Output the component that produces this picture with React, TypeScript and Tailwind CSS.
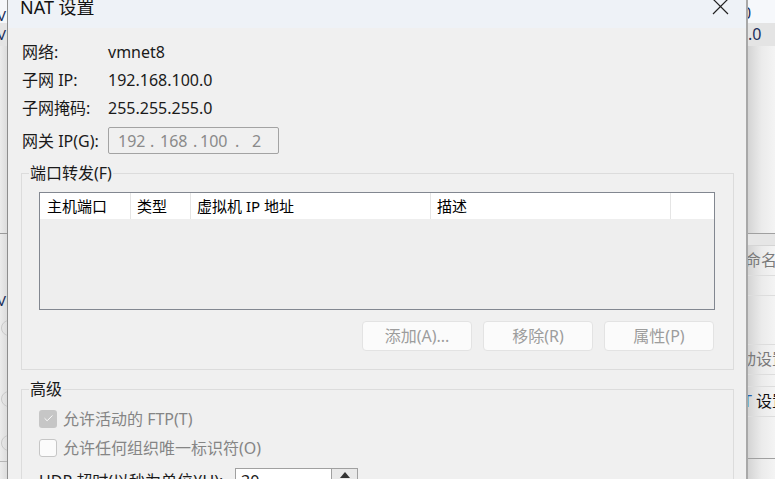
import { Check } from 'lucide-react';

function LeftStrip() {
  return (
    <div className="flex w-[7px] shrink-0 flex-col overflow-hidden bg-gradient-to-r from-[#ececec] to-[#dcdcdc] text-[15px] text-[#1b2f5c]">
      <div className="h-[23px] shrink-0 whitespace-nowrap bg-[#f5f7fa] leading-[30px] -ml-[3px]">VM</div>
      <div className="h-[23px] shrink-0 whitespace-nowrap bg-[#e4e4e4] leading-[23px] -ml-[3px]">VM</div>
      <div className="h-[187px] shrink-0" />
      <div className="h-[57px] shrink-0 border-t border-[#9a9a9a]" />
      <div className="h-[24px] shrink-0 whitespace-nowrap leading-[20px] -ml-[3px]">VM</div>
      <div className="ml-[1px] mt-[6px] h-[16px] w-[16px] shrink-0 rounded-full border border-[#c9c9c9]" />
      <div className="ml-[1px] mt-[55px] h-[16px] w-[16px] shrink-0 rounded-full border border-[#c9c9c9]" />
      <div className="ml-[1px] mt-[28px] h-[16px] w-[16px] shrink-0 rounded-full border border-[#c9c9c9]" />
      <div className="mt-[10px] shrink-0 border-t border-[#b5b5b5]" />
    </div>
  );
}

function RightStrip() {
  return (
    <div className="flex min-w-0 flex-1 flex-col overflow-hidden bg-gradient-to-r from-[#d4d4d4] via-[#ebebeb] to-[#f4f4f4] text-[16px]">
      <div className="h-[23px] shrink-0 whitespace-nowrap bg-[#f6f8fb] leading-[26px] text-[#1b2f5c] -ml-[6px]">0</div>
      <div className="h-[23px] shrink-0 whitespace-nowrap bg-[#e4e4e4] leading-[23px] text-[#1b2f5c]">.0</div>
      <div className="h-[187px] shrink-0" />
      <div className="h-[12px] shrink-0 border-t border-[#a0a0a0] bg-[#e6e6e6]" />
      <div className="h-[30px] shrink-0 whitespace-nowrap border-t border-[#d5d5d5] leading-[29px] text-[#7a7a7a] -ml-[3px]">命名</div>
      <div className="h-[20px] shrink-0 border-t border-[#dddddd]" />
      <div className="h-[49px] shrink-0 border-t border-[#dddddd]" />
      <div className="h-[30px] shrink-0 whitespace-nowrap border-t border-[#dddddd] leading-[29px] text-[#7a7a7a] -ml-[8px]">动设置</div>
      <div className="h-[12px] shrink-0 border-t border-[#dddddd]" />
      <div className="h-[30px] shrink-0 whitespace-nowrap border-t border-[#dddddd] leading-[29px] text-[#111] -ml-[5px]">
        <span className="text-[#2563b0]">T</span> 设置
      </div>
      <div className="h-[42px] shrink-0 border-t border-[#dddddd]" />
      <div className="h-[20px] shrink-0 border-t border-[#a0a0a0]" />
    </div>
  );
}

function InfoRow({ label, value }: { label: string; value: string }) {
  return (
    <div className="ml-[14px] flex h-[28px] items-center">
      <span className="w-[86px]">{label}</span>
      <span>{value}</span>
    </div>
  );
}

function Dialog() {
  const buttons = ['添加(A)...', '移除(R)', '属性(P)'];

  return (
    <div className="relative z-10 flex w-[741px] shrink-0 flex-col border-l border-r-2 border-l-[#8e8e8e] border-r-[#a8a8a8] bg-[#f0f0f0]">
      {/* title bar */}
      <div className="flex h-[28px] shrink-0 items-start bg-[#eef2f7]">
        <span className="ml-[12px] mt-[-2px] text-[18px] leading-[19px] text-[#111]">NAT 设置</span>
        <svg className="ml-auto mr-[17px] mt-[-2px]" width="17" height="17" viewBox="0 0 17 17">
          <path d="M1 1L16 16M16 1L1 16" stroke="#222" strokeWidth="1.2" fill="none" />
        </svg>
      </div>

      <div className="flex flex-col pt-[10px]">
        <InfoRow label="网络:" value="vmnet8" />
        <InfoRow label="子网 IP:" value="192.168.100.0" />
        <InfoRow label="子网掩码:" value="255.255.255.0" />

        <div className="ml-[14px] mt-[5px] flex h-[27px] items-center">
          <span className="w-[86px]">网关 IP(G):</span>
          <div className="flex h-[27px] w-[171px] items-center rounded-[2px] border border-[#a3a3a3] pl-[9px] text-[#8a8a8a]">
            <span className="w-[32px]">192</span>
            <span className="w-[10px]">.</span>
            <span className="w-[33px]">168</span>
            <span className="w-[7px]">.</span>
            <span className="w-[35px]">100</span>
            <span className="w-[17px]">.</span>
            <span>2</span>
          </div>
        </div>

        {/* port forwarding */}
        <fieldset className="ml-[13px] mt-[9px] w-[713px] border border-[#dcdcdc]">
          <legend className="ml-[7px] px-[1px] leading-[20px]">端口转发(F)</legend>
          <div className="ml-[17px] mr-[18px] mt-[9px] h-[118px] border border-[#828790] bg-[#eeeeee] text-[15px]">
            <div className="flex h-[26px] bg-white leading-[26px] text-black">
              <div className="w-[91px] border-r border-[#e5e5e5] pl-[7px]">主机端口</div>
              <div className="w-[60px] border-r border-[#e5e5e5] pl-[6px]">类型</div>
              <div className="w-[240px] border-r border-[#e5e5e5] pl-[6px]">虚拟机 IP 地址</div>
              <div className="w-[240px] border-r border-[#e5e5e5] pl-[6px]">描述</div>
              <div className="flex-1" />
            </div>
          </div>
          <div className="mb-[18px] mr-[19px] mt-[11px] flex justify-end gap-[11px]">
            {buttons.map((b) => (
              <button
                key={b}
                className="h-[30px] w-[110px] rounded-[4px] border border-[#e3e3e3] bg-[#fbfbfb] text-[#9d9d9d]"
              >
                {b}
              </button>
            ))}
          </div>
        </fieldset>

        {/* advanced */}
        <fieldset className="ml-[13px] mt-[9px] w-[713px] border border-[#dcdcdc] pb-[10px]">
          <legend className="ml-[7px] px-[1px] leading-[20px]">高级</legend>
          <div className="ml-[17px] mt-[5px] flex h-[29px] items-center gap-[6px] text-[#858585]">
            <span className="flex h-[18px] w-[18px] items-center justify-center rounded-[3px] bg-[#c6c6c6]">
              <Check size={11} color="#ffffff" strokeWidth={2} />
            </span>
            允许活动的 FTP(T)
          </div>
          <div className="ml-[17px] flex h-[29px] items-center gap-[6px] text-[#858585]">
            <span className="h-[18px] w-[18px] rounded-[3px] border border-[#c6c6c6] bg-[#fbfbfb]" />
            允许任何组织唯一标识符(O)
          </div>
          <div className="ml-[17px] mt-[6px] flex items-center">
            <span className="w-[196px]">UDP 超时(以秒为单位)(U):</span>
            <div className="flex h-[26px] w-[123px] border border-[#a0a0a0] bg-white">
              <span className="flex-1 pl-[5px] leading-[24px]">30</span>
              <div className="flex w-[26px] flex-col border-l border-[#a0a0a0]">
                <div className="flex h-[12px] items-center justify-center border-b border-[#a0a0a0] bg-[#e9e9e9]">
                  <svg width="10" height="6" viewBox="0 0 10 6">
                    <path d="M0 6L5 0L10 6Z" fill="#333" />
                  </svg>
                </div>
                <div className="flex-1 bg-[#e9e9e9]" />
              </div>
            </div>
          </div>
        </fieldset>
      </div>
    </div>
  );
}

export default function App() {
  return (
    <div className="flex h-[479px] w-[775px] overflow-hidden bg-[#f0f0f0] font-['Noto_Sans','Noto_Sans_CJK_SC',sans-serif] text-[16px] text-[#1a1a1a]">
      <LeftStrip />
      <Dialog />
      <RightStrip />
    </div>
  );
}
